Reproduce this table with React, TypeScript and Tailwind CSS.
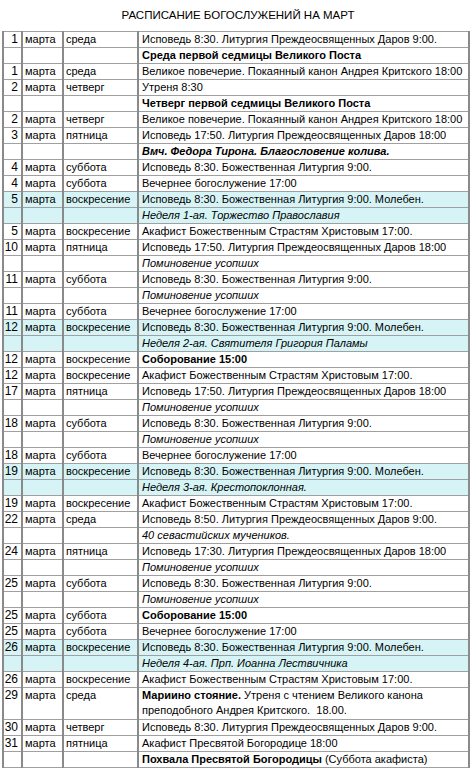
import React from 'react';

type Row = {
  n?: string;
  day?: string;
  text: React.ReactNode;
  hl?: boolean;
  kind?: 'b' | 'i' | 'bi';
  tall?: boolean;
};

const LIT_PD_9 = 'Исповедь 8:30. Литургия Преждеосвященных Даров 9:00.';
const LIT_PD_18 = 'Исповедь 17:50. Литургия Преждеосвященных Даров 18:00';
const LIT_9 = 'Исповедь 8:30. Божественная Литургия 9:00.';
const LIT_MOL = 'Исповедь 8:30. Божественная Литургия 9:00. Молебен.';
const VESP = 'Вечернее богослужение 17:00';
const AKAF = 'Акафист Божественным Страстям Христовым 17:00.';
const POVECH = 'Великое повечерие. Покаянный канон Андрея Критского 18:00';
const POMIN = 'Поминовение усопших';

const rows: Row[] = [
  { n: '1', day: 'среда', text: LIT_PD_9 },
  { text: 'Среда первой седмицы Великого Поста', kind: 'b' },
  { n: '1', day: 'среда', text: POVECH },
  { n: '2', day: 'четверг', text: 'Утреня 8:30' },
  { text: 'Четверг первой седмицы Великого Поста', kind: 'b' },
  { n: '2', day: 'четверг', text: POVECH },
  { n: '3', day: 'пятница', text: LIT_PD_18 },
  { text: 'Вмч. Федора Тирона. Благословение колива.', kind: 'bi' },
  { n: '4', day: 'суббота', text: LIT_9 },
  { n: '4', day: 'суббота', text: VESP },
  { n: '5', day: 'воскресение', text: LIT_MOL, hl: true },
  { text: 'Неделя 1-ая. Торжество Православия', kind: 'i', hl: true },
  { n: '5', day: 'воскресение', text: AKAF },
  { n: '10', day: 'пятница', text: LIT_PD_18 },
  { text: POMIN, kind: 'i' },
  { n: '11', day: 'суббота', text: LIT_9 },
  { text: POMIN, kind: 'i' },
  { n: '11', day: 'суббота', text: VESP },
  { n: '12', day: 'воскресение', text: LIT_MOL, hl: true },
  { text: 'Неделя 2-ая. Святителя Григория Паламы', kind: 'i', hl: true },
  { n: '12', day: 'воскресение', text: 'Соборование 15:00', kind: 'b' },
  { n: '12', day: 'воскресение', text: AKAF },
  { n: '17', day: 'пятница', text: LIT_PD_18 },
  { text: POMIN, kind: 'i' },
  { n: '18', day: 'суббота', text: LIT_9 },
  { text: POMIN, kind: 'i' },
  { n: '18', day: 'суббота', text: VESP },
  { n: '19', day: 'воскресение', text: LIT_MOL, hl: true },
  { text: 'Неделя 3-ая. Крестопоклонная.', kind: 'i', hl: true },
  { n: '19', day: 'воскресение', text: AKAF },
  { n: '22', day: 'среда', text: 'Исповедь 8:50. Литургия Преждеосвященных Даров 9:00.' },
  { text: '40 севастийских мучеников.', kind: 'i' },
  { n: '24', day: 'пятница', text: 'Исповедь 17:30. Литургия Преждеосвященных Даров 18:00' },
  { text: POMIN, kind: 'i' },
  { n: '25', day: 'суббота', text: LIT_9 },
  { text: POMIN, kind: 'i' },
  { n: '25', day: 'суббота', text: 'Соборование 15:00', kind: 'b' },
  { n: '25', day: 'суббота', text: VESP },
  { n: '26', day: 'воскресение', text: LIT_MOL, hl: true },
  { text: 'Неделя 4-ая. Прп. Иоанна Лествичника', kind: 'i', hl: true },
  { n: '26', day: 'воскресение', text: AKAF },
  {
    n: '29',
    day: 'среда',
    tall: true,
    text: (
      <>
        <b>Мариино стояние.</b> Утреня с чтением Великого канона
        <br />
        преподобного Андрея Критского.&nbsp; 18.00.
      </>
    ),
  },
  { n: '30', day: 'четверг', text: LIT_PD_9 },
  { n: '31', day: 'пятница', text: 'Акафист Пресвятой Богородице 18:00' },
  {
    text: (
      <>
        <b>Похвала Пресвятой Богородицы</b> (Суббота акафиста)
      </>
    ),
  },
];

export default function App() {
  return (
    <div className="w-[474px] h-[769px] bg-white text-black overflow-hidden" style={{ fontFamily: '"Liberation Sans", Arial, sans-serif' }}>
      <div className="h-[31px] flex items-center justify-center text-[11.5px] pl-[2px]">РАСПИСАНИЕ БОГОСЛУЖЕНИЙ НА МАРТ</div>
      <table className="ml-[2px] w-[468px] border-collapse table-fixed text-[11px] leading-[15px]">
        <colgroup>
          <col className="w-[19px]" />
          <col className="w-[41px]" />
          <col className="w-[75px]" />
          <col />
        </colgroup>
        <tbody>
          {rows.map((r, i) => {
            const bg = r.hl ? 'bg-[#d6f4f6]' : '';
            const h = r.tall ? 'h-[32px]' : 'h-[16px]';
            const cell = `border-x-2 border-x-[#8a8a8a] border-y border-y-[#a0a0a0] p-0 align-top whitespace-nowrap ${bg}`;
            const k = r.kind === 'b' ? 'font-bold' : r.kind === 'i' ? 'italic' : r.kind === 'bi' ? 'font-bold italic' : '';
            return (
              <tr key={i} className={h}>
                <td className={`${cell} text-right pr-[3px] text-[12px]`}>{r.n}</td>
                <td className={`${cell} pl-[2px]`}>{r.n ? 'марта' : ''}</td>
                <td className={`${cell} pl-[2px]`}>{r.day}</td>
                <td className={`${cell} pl-[3px] border-y-[#6e6e6e] ${k}`}>{r.text}</td>
              </tr>
            );
          })}
        </tbody>
      </table>
    </div>
  );
}
